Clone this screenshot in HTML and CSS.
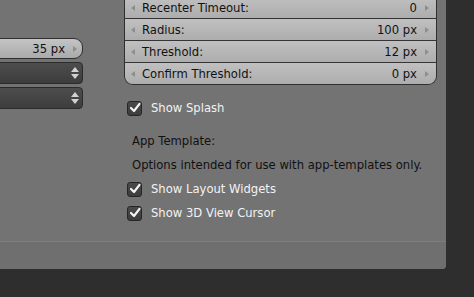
FILE: index.html
```html
<!DOCTYPE html>
<html>
<head>
<meta charset="utf-8">
<link rel="stylesheet" href="styles.css">
</head>
<body>
<div class="panel">
  <div class="main">
    <div class="left">
      <div class="numfield"><span class="val">35 px</span><span class="arr-r"></span></div>
      <div class="dropdown"><span class="updown"><span class="up"></span><span class="down"></span></span></div>
      <div class="dropdown"><span class="updown"><span class="up"></span><span class="down"></span></span></div>
    </div>
    <div class="right">
      <div class="numbox">
        <div class="nrow"><span class="arr-l"></span><span class="lbl">Recenter Timeout:</span><span class="val">0</span><span class="arr-r"></span></div>
        <div class="nrow"><span class="arr-l"></span><span class="lbl">Radius:</span><span class="val">100 px</span><span class="arr-r"></span></div>
        <div class="nrow"><span class="arr-l"></span><span class="lbl">Threshold:</span><span class="val">12 px</span><span class="arr-r"></span></div>
        <div class="nrow last"><span class="arr-l"></span><span class="lbl">Confirm Threshold:</span><span class="val">0 px</span><span class="arr-r"></span></div>
      </div>
      <div class="check splash"><span class="box"><svg viewBox="0 0 14 14" width="14" height="14"><path d="M3 7 L6 10 L11.5 2.8" fill="none" stroke="#f4f4f4" stroke-width="2.2" stroke-linecap="round" stroke-linejoin="round"/></svg></span><span class="clabel">Show Splash</span></div>
      <div class="text">App Template:</div>
      <div class="text">Options intended for use with app-templates only.</div>
      <div class="check"><span class="box"><svg viewBox="0 0 14 14" width="14" height="14"><path d="M3 7 L6 10 L11.5 2.8" fill="none" stroke="#f4f4f4" stroke-width="2.2" stroke-linecap="round" stroke-linejoin="round"/></svg></span><span class="clabel">Show Layout Widgets</span></div>
      <div class="check"><span class="box"><svg viewBox="0 0 14 14" width="14" height="14"><path d="M3 7 L6 10 L11.5 2.8" fill="none" stroke="#f4f4f4" stroke-width="2.2" stroke-linecap="round" stroke-linejoin="round"/></svg></span><span class="clabel">Show 3D View Cursor</span></div>
    </div>
  </div>
  <div class="footer"></div>
</div>
</body>
</html>
```

FILE: styles.css
```css
html, body {
  margin: 0;
  padding: 0;
}
body {
  width: 474px;
  height: 297px;
  overflow: hidden;
  background: #2e2e2e;
  font-family: "DejaVu Sans", "Liberation Sans", sans-serif;
  font-size: 11.6px;
  color: #111;
}
.panel {
  width: 446px;
  height: 269px;
  background: #737373;
  border-bottom-right-radius: 4px;
  display: flex;
  flex-direction: column;
  overflow: hidden;
}
.main {
  height: 241px;
  display: flex;
}
.footer {
  flex: 1;
  border-top: 1px solid #7e7e7e;
  background: #6f6f6f;
}
.left {
  width: 83px;
  padding-top: 38px;
  display: flex;
  flex-direction: column;
  gap: 3px;
}
.numfield {
  margin-left: -20px;
  height: 19px;
  border: 1px solid #2f2f2f;
  border-radius: 9px;
  background: linear-gradient(#c4c4c4, #aaaaaa);
  display: flex;
  align-items: center;
  justify-content: flex-end;
  padding-right: 5px;
}
.numfield .val {
  margin-right: 8px;
}
.dropdown {
  margin-left: -20px;
  height: 20px;
  border: 1px solid #2b2b2b;
  border-radius: 4px;
  background: linear-gradient(#4d4d4d, #3d3d3d);
  display: flex;
  align-items: center;
  justify-content: flex-end;
  padding-right: 3px;
}
.updown {
  display: flex;
  flex-direction: column;
  gap: 2px;
}
.up {
  width: 0; height: 0;
  border-left: 4px solid transparent;
  border-right: 4px solid transparent;
  border-bottom: 5px solid #d2d2d2;
}
.down {
  width: 0; height: 0;
  border-left: 4px solid transparent;
  border-right: 4px solid transparent;
  border-top: 5px solid #d2d2d2;
}
.arr-r {
  width: 0; height: 0;
  border-top: 3.5px solid transparent;
  border-bottom: 3.5px solid transparent;
  border-left: 4px solid #8d8d8d;
}
.arr-l {
  width: 0; height: 0;
  border-top: 3.5px solid transparent;
  border-bottom: 3.5px solid transparent;
  border-right: 4px solid #8d8d8d;
}
.right {
  margin-left: 41px;
  width: 313px;
  display: flex;
  flex-direction: column;
}
.numbox {
  margin-top: -3px;
  border: 1px solid #2f2f2f;
  border-top: none;
  border-radius: 0 0 9px 9px;
  overflow: hidden;
}
.nrow {
  height: 21px;
  border-bottom: 1px solid #353535;
  background: linear-gradient(#c0c0c0, #adadad);
  display: flex;
  align-items: center;
  padding: 0 7px 0 6px;
}
.nrow.last {
  border-bottom: none;
}
.nrow .lbl {
  margin-left: 7px;
  flex: 1;
}
.nrow .val {
  margin-right: 8px;
}
.check {
  height: 24px;
  display: flex;
  align-items: center;
  padding-left: 3px;
}
.check.splash {
  margin-top: 11px;
  margin-bottom: 9px;
}
.box {
  width: 15px;
  height: 15px;
  box-sizing: border-box;
  border: 1px solid #262626;
  border-radius: 3px;
  background: linear-gradient(#4a4a4a, #3c3c3c);
  display: flex;
  align-items: center;
  justify-content: center;
}
.box svg {
  display: block;
  flex: none;
}
.clabel {
  margin-left: 9px;
  color: #f2f2f2;
}
.text {
  height: 24px;
  display: flex;
  align-items: center;
  padding-left: 8px;
}
```
